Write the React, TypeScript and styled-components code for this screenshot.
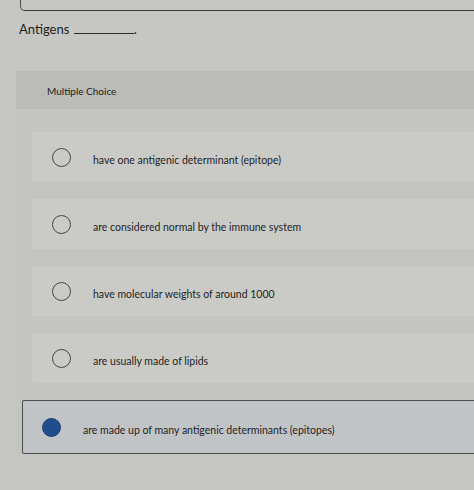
import React, { useState } from "react";
import styled, { createGlobalStyle } from "styled-components";

const choices = [
  "have one antigenic determinant (epitope)",
  "are considered normal by the immune system",
  "have molecular weights of around 1000",
  "are usually made of lipids",
  "are made up of many antigenic determinants (epitopes)",
];

function App() {
  const [picked, setPicked] = useState<number>(4);

  return (
    <>
      <GlobalStyle />
      <Page>
        <PrevFrame />
        <Prompt>
          Antigens <Blank />.
        </Prompt>
        <Panel>
          <PanelHead>Multiple Choice</PanelHead>
          <ChoiceList>
            {choices.map((text, i) => (
              <Choice key={i} $selected={picked === i} onClick={() => setPicked(i)}>
                <Radio $selected={picked === i} />
                <ChoiceText>{text}</ChoiceText>
              </Choice>
            ))}
          </ChoiceList>
        </Panel>
      </Page>
    </>
  );
}

const GlobalStyle = createGlobalStyle`
  body {
    margin: 0;
    background: #c5c6c2;
    font-family: Lato, "Open Sans", sans-serif;
    color: #222;
  }
`;

const Page = styled.div`
  width: 474px;
  height: 490px;
  overflow: hidden;
  background: #c6c7c3;
`;

// bottom edge of the previous question's frame
const PrevFrame = styled.div`
  margin-left: 20px;
  height: 10px;
  border-left: 1px solid #4a4b49;
  border-bottom: 1px solid #3a3b39;
  border-bottom-left-radius: 5px;
`;

const Prompt = styled.div`
  padding: 9px 0 0 19px;
  font-size: 13px;
  line-height: 18px;
  color: #1e1e1e;
`;

const Blank = styled.span`
  display: inline-block;
  width: 60px;
  height: 12px;
  margin-left: 1px;
  border-bottom: 1px solid #2a2a2a;
`;

const Panel = styled.section`
  margin: 33px 0 0 16px;
  display: flex;
  flex-direction: column;
`;

const PanelHead = styled.div`
  height: 38px;
  display: flex;
  align-items: center;
  padding: 2px 0 0 31px;
  box-sizing: border-box;
  background: #bbbcb8;
  font-size: 10px;
  color: #222;
`;

const ChoiceList = styled.div`
  display: flex;
  flex-direction: column;
  gap: 17px;
  padding-top: 23px;
  background: #c4c5c1;
`;

const Choice = styled.div<{ $selected: boolean }>`
  height: ${(p) => (p.$selected ? "54px" : "50px")};
  margin-left: ${(p) => (p.$selected ? "6px" : "16px")};
  display: flex;
  align-items: center;
  gap: 22px;
  padding-left: ${(p) => (p.$selected ? "19px" : "20px")};
  box-sizing: border-box;
  background: ${(p) => (p.$selected ? "#c0c4c6" : "#cacbc7")};
  border: ${(p) => (p.$selected ? "1px solid #4c4d4d" : "none")};
  border-right: none;
  border-radius: 2px 0 0 2px;
  cursor: pointer;
`;

const Radio = styled.span<{ $selected: boolean }>`
  flex: none;
  width: 19px;
  height: 19px;
  border-radius: 50%;
  box-sizing: border-box;
  border: 1.5px solid ${(p) => (p.$selected ? "#1d3f73" : "#454645")};
  background: ${(p) => (p.$selected ? "#204d8c" : "transparent")};
`;

const ChoiceText = styled.span`
  font-size: 10.5px;
  color: #1f1f1f;
  padding-top: 5px;
`;

export default App;
